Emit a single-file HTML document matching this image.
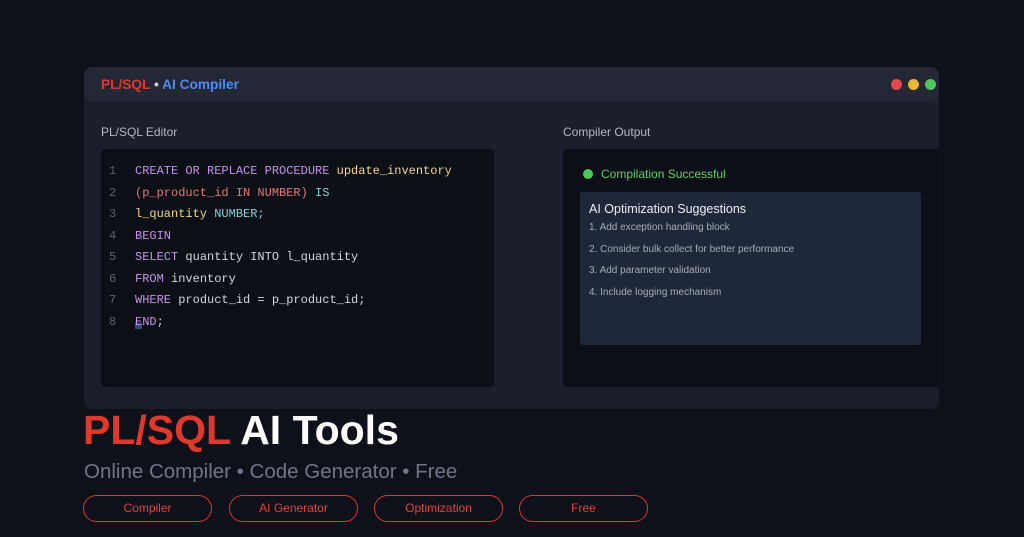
<!DOCTYPE html>
<html><head><meta charset="utf-8"><style>
*{margin:0;padding:0;box-sizing:border-box}
body{width:1024px;height:537px;background:#0e101a;font-family:"Liberation Sans",sans-serif;position:relative;overflow:hidden}
.win{position:absolute;left:84px;top:67px;width:855px;height:342px;background:#1b1e2b;border-radius:8px;overflow:hidden}
.hdr{height:34px;background:#242836;border-radius:8px;position:relative}
.hdr .t{position:absolute;left:17px;top:10px;font-weight:bold;font-size:13.7px}
.dot{position:absolute;top:12px;width:11px;height:11px;border-radius:50%}
.lbl{position:absolute;font-size:12px;color:#b4b8c4}
.ed{position:absolute;left:17px;top:82px;width:393px;height:238px;background:#0c0f15;border-radius:4px;font-family:"Liberation Mono",monospace;font-size:12px}
.ln{position:absolute;left:0;height:21px;line-height:21px;white-space:pre}
.n{position:absolute;left:8px;color:#5b6170;width:12px}
.c{position:absolute;left:34px;color:#d4d6dc}
.k{color:#c792ea}.f{color:#f2d58a}.p{color:#e07a7a}.b{color:#7fd4d8}
.out{position:absolute;left:479px;top:82px;width:380px;height:238px;background:#0c0f15;border-radius:4px}
.sug{position:absolute;left:17px;top:43px;width:341px;height:153px;background:#1f283a;border-radius:3px;padding:10px 9px}
.sug h4{font-weight:normal;color:#eef0f4;font-size:12.5px;margin-bottom:6px}
.sug p{font-size:10px;color:#a6acb8;height:21.5px}
.btn{position:absolute;top:495px;width:129px;height:27px;border:1px solid #d63a2e;border-radius:14px;color:#e0453a;font-size:12px;text-align:center;line-height:25px}
</style></head><body>
<div class="win">
 <div class="hdr"><div class="t"><span style="color:#e0392b">PL/SQL</span> <span style="color:#ddd">•</span> <span style="color:#4c8bf0">AI Compiler</span></div>
 <div class="dot" style="left:807px;background:#e5484d"></div><div class="dot" style="left:824px;background:#e8b830"></div><div class="dot" style="left:841px;background:#4cc95a"></div></div>
 <div class="lbl" style="left:17px;top:58px">PL/SQL Editor</div>
 <div class="lbl" style="left:479px;top:58px">Compiler Output</div>
 <div class="ed">
  <div class="ln" style="top:12px"><span class="n">1</span><span class="c"><span class="k">CREATE OR REPLACE PROCEDURE</span> <span class="f">update_inventory</span></span></div>
  <div class="ln" style="top:33.5px"><span class="n">2</span><span class="c"><span class="p">(p_product_id IN NUMBER)</span> <span class="b">IS</span></span></div>
  <div class="ln" style="top:55px"><span class="n">3</span><span class="c"><span class="f">l_quantity</span> <span class="b">NUMBER;</span></span></div>
  <div class="ln" style="top:76.5px"><span class="n">4</span><span class="c"><span class="k">BEGIN</span></span></div>
  <div class="ln" style="top:98px"><span class="n">5</span><span class="c"><span class="k">SELECT</span> quantity INTO l_quantity</span></div>
  <div class="ln" style="top:119.5px"><span class="n">6</span><span class="c"><span class="k">FROM</span> inventory</span></div>
  <div class="ln" style="top:141px"><span class="n">7</span><span class="c"><span class="k">WHERE</span> product_id = p_product_id;</span></div>
  <div class="ln" style="top:162.5px"><span class="n">8</span><span class="c"><span class="k" style="background:linear-gradient(#0000 55%,#2f4a80 55%) no-repeat;background-size:7px 100%">END</span>;</span></div>
 </div>
 <div class="out">
  <div style="position:absolute;left:20px;top:20px;width:10px;height:10px;border-radius:50%;background:#4cc95a"></div>
  <div style="position:absolute;left:38px;top:18px;font-size:12px;color:#5fcf6a">Compilation Successful</div>
  <div class="sug"><h4>AI Optimization Suggestions</h4>
   <p>1. Add exception handling block</p><p>2. Consider bulk collect for better performance</p><p>3. Add parameter validation</p><p>4. Include logging mechanism</p></div>
 </div>
</div>
<div style="position:absolute;left:83px;top:406px;font-size:41px;font-weight:bold;line-height:48px"><span style="color:#e0392b">PL/SQL</span> <span style="color:#fff">AI Tools</span></div>
<div style="position:absolute;left:84px;top:460px;font-size:20.5px;color:#6f7688">Online Compiler • Code Generator • Free</div>
<div class="btn" style="left:83px">Compiler</div>
<div class="btn" style="left:229px">AI Generator</div>
<div class="btn" style="left:374px">Optimization</div>
<div class="btn" style="left:519px">Free</div>
</body></html>
